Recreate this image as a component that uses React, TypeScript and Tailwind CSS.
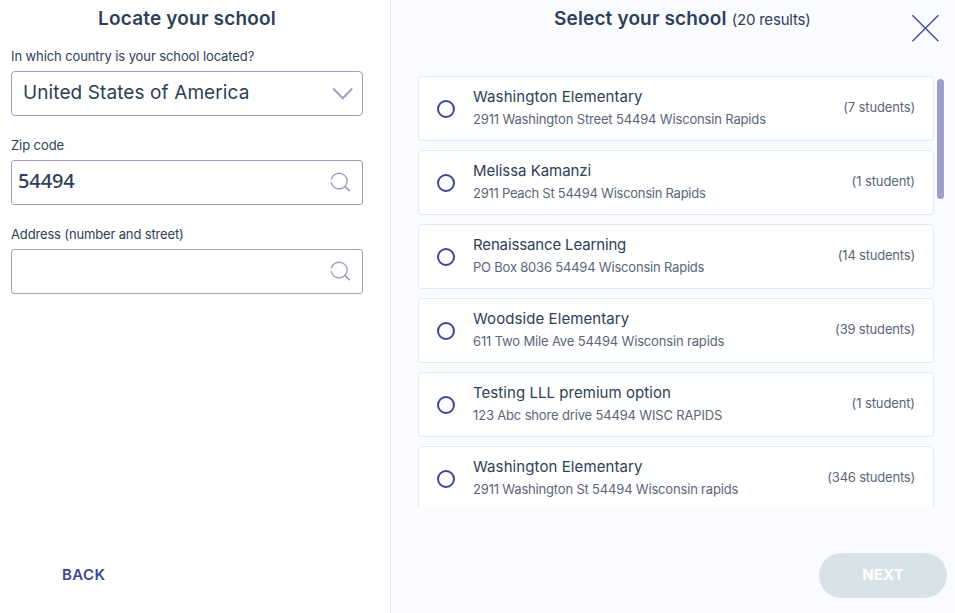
import React from "react";

type School = {
  name: string;
  address: string;
  students: string;
  nameClass: string;
  addressClass: string;
  studentsClass: string;
};

const schools: School[] = [
  { name: "Washington Elementary", address: "2911 Washington Street 54494 Wisconsin Rapids", students: "(7 students)", nameClass: "tracking-[0.09px]", addressClass: "tracking-[-0.16px]", studentsClass: "tracking-[-0.15px]" },
  { name: "Melissa Kamanzi", address: "2911 Peach St 54494 Wisconsin Rapids", students: "(1 student)", nameClass: "tracking-[-0.05px]", addressClass: "tracking-[-0.26px]", studentsClass: "tracking-[-0.12px]" },
  { name: "Renaissance Learning", address: "PO Box 8036 54494 Wisconsin Rapids", students: "(14 students)", nameClass: "tracking-[-0.14px]", addressClass: "tracking-[-0.2px]", studentsClass: "tracking-[-0.2px]" },
  { name: "Woodside Elementary", address: "611 Two Mile Ave 54494 Wisconsin rapids", students: "(39 students)", nameClass: "tracking-[0.08px]", addressClass: "tracking-[-0.16px]", studentsClass: "tracking-[-0.18px]" },
  { name: "Testing LLL premium option", address: "123 Abc shore drive 54494 WISC RAPIDS", students: "(1 student)", nameClass: "tracking-[0.05px]", addressClass: "tracking-[-0.16px]", studentsClass: "tracking-[-0.12px]" },
  { name: "Washington Elementary", address: "2911 Washington St 54494 Wisconsin rapids", students: "(346 students)", nameClass: "tracking-[0.09px]", addressClass: "tracking-[-0.18px]", studentsClass: "tracking-[-0.21px]" },
];

function SearchIcon() {
  return (
    <svg className="mb-[2px]" width="22" height="22" viewBox="0 0 22 22" fill="none" stroke="#9d9fc9" strokeWidth="1.4">
      <path d="M1.3 8.4A8 7.7 0 1 1 1.2 11.2" />
      <path d="M14.8 15.3L19.8 20.2" strokeWidth="1.8" />
    </svg>
  );
}

function SchoolRow({ school }: { school: School }) {
  return (
    <li className="flex h-[65px] shrink-0 items-center rounded border border-[#e0eaff] bg-white pl-[18px] pr-[18px]">
      <span className="h-[18px] w-[18px] shrink-0 rounded-full border-2 border-[#3f4694]" />
      <div className="ml-[18px] flex flex-1 flex-col whitespace-nowrap pb-[2px]">
        <span className={"text-[15px] leading-[22px] text-[#2e4057] " + school.nameClass}>{school.name}</span>
        <span className={"text-[13px] leading-[22px] text-[#5b6678] " + school.addressClass}>{school.address}</span>
      </div>
      <span className={"whitespace-nowrap pb-1 text-[13px] leading-5 text-[#5b6678] " + school.studentsClass}>{school.students}</span>
    </li>
  );
}

export default function App() {
  return (
    <main className="flex h-[613px] w-[955px] overflow-hidden bg-white font-['Inter',sans-serif] text-[#2e4057]">
      <section className="flex w-[390px] shrink-0 flex-col pl-[11px] pr-[27px]">
        <h1 className="mt-[6px] whitespace-nowrap text-center text-[19px] font-semibold leading-[26px] tracking-[0.18px]">Locate your school</h1>
        <label className="mt-[14px] text-[13px] leading-5 tracking-[-0.1px]">In which country is your school located?</label>
        <div className="mt-[5px] flex h-[45px] items-center justify-between rounded border border-[#9d9fc9] pl-[11px] pr-[9px]">
          <span className="pb-[2px] text-[19px] leading-6 tracking-[0.1px]">United States of America</span>
          <svg width="21" height="13" viewBox="0 0 21 13" fill="none" stroke="#9d9fc9" strokeWidth="2">
            <path d="M1.2 1.5L10.7 11.3L20.2 1.5" />
          </svg>
        </div>
        <label className="mt-[19px] text-[13px] leading-5 tracking-[-0.08px]">Zip code</label>
        <div className="mt-[5px] flex h-[45px] items-center justify-between rounded-[3px] border border-[#9d9fc9] pl-[6px] pr-[10px]">
          <span className="pb-[4px] font-['Noto_Sans',sans-serif] text-[20px] font-medium leading-6 tracking-[-0.1px]">54494</span>
          <SearchIcon />
        </div>
        <label className="mt-[19px] text-[13px] leading-5 tracking-[-0.15px]">Address (number and street)</label>
        <div className="mt-[5px] flex h-[45px] items-center justify-end rounded-[3px] border border-[#9d9fc9] pr-[10px]">
          <SearchIcon />
        </div>
        <button className="mb-[27px] ml-[51px] mt-auto self-start text-[15px] font-semibold leading-[22px] tracking-[0.4px] text-[#3f4694]">BACK</button>
      </section>
      <section className="flex flex-1 flex-col border-l border-[#e0eaff] bg-[#fafbff] pl-[27px]">
        <header className="flex h-[76px] shrink-0 items-start pr-[16px]">
          <h2 className="ml-[136px] mt-[6px] whitespace-nowrap text-[19px] font-semibold leading-[26px] tracking-[0.15px]">Select your school</h2>
          <span className="ml-[5px] mt-[8px] whitespace-nowrap text-[15px] leading-6 tracking-[-0.2px]">(20 results)</span>
          <svg className="ml-auto mt-[14px]" width="28" height="28" viewBox="0 0 28 28" fill="none" stroke="#3f4694" strokeWidth="1.3">
            <path d="M1.4 1.2L27.4 27.2M27.4 1.2L1.4 27.2" />
          </svg>
        </header>
        <div className="flex h-[431px] shrink-0 overflow-hidden">
          <ul className="flex w-[516px] shrink-0 flex-col gap-[9px]">
            {schools.map((school, i) => (
              <SchoolRow key={i} school={school} />
            ))}
          </ul>
          <div className="ml-[3px] mt-[3px] h-[120px] w-[7px] shrink-0 rounded-full bg-[#9d9fc9]" />
        </div>
        <button className="mb-[15px] mr-[8px] mt-auto h-[45px] w-[128px] self-end rounded-full bg-[#d8e3e8] pb-[1px] text-[15px] font-bold tracking-[0.15px] text-white">NEXT</button>
      </section>
    </main>
  );
}
